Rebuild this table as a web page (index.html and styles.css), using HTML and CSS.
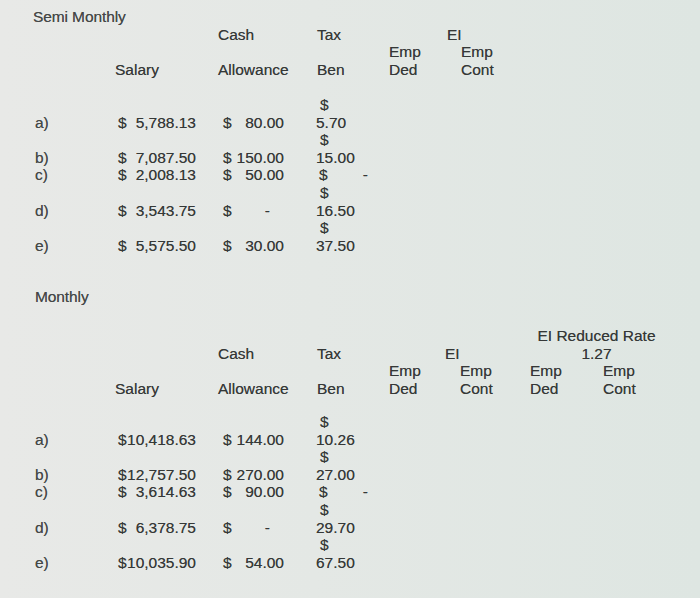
FILE: index.html
```html
<!DOCTYPE html>
<html>
<head>
<meta charset="utf-8">
<title>Semi Monthly / Monthly</title>
<link rel="stylesheet" href="styles.css">
</head>
<body>
<div class="page">
  <section class="sheet">
    <div class="title">Semi Monthly</div>
    <div class="row head">
      <div></div>
      <div class="h-sal">Salary</div>
      <div class="h-allow">Cash<br><br>Allowance</div>
      <div class="h-tax">Tax<br><br>Ben</div>
      <div class="h-ded">Emp<br>Ded</div>
      <div class="h-cont"><div class="ei">EI</div><div class="ec">Emp<br>Cont</div></div>
    </div>
    <div class="data">
      <div class="row">
        <div class="lbl">a)</div>
        <div class="money sal"><span>$</span><span>5,788.13</span></div>
        <div class="money allow"><span>$</span><span>80.00</span></div>
        <div class="tax"><div class="cur">$</div><div>5.70</div></div>
      </div>
      <div class="row">
        <div class="lbl">b)</div>
        <div class="money sal"><span>$</span><span>7,087.50</span></div>
        <div class="money allow"><span>$</span><span>150.00</span></div>
        <div class="tax"><div class="cur">$</div><div>15.00</div></div>
      </div>
      <div class="row">
        <div class="lbl">c)</div>
        <div class="money sal"><span>$</span><span>2,008.13</span></div>
        <div class="money allow"><span>$</span><span>50.00</span></div>
        <div class="money taxm"><span class="cur">$</span><span class="tdash">-</span></div>
      </div>
      <div class="row">
        <div class="lbl">d)</div>
        <div class="money sal"><span>$</span><span>3,543.75</span></div>
        <div class="money allow"><span>$</span><span class="adash">-</span></div>
        <div class="tax"><div class="cur">$</div><div>16.50</div></div>
      </div>
      <div class="row">
        <div class="lbl">e)</div>
        <div class="money sal"><span>$</span><span>5,575.50</span></div>
        <div class="money allow"><span>$</span><span>30.00</span></div>
        <div class="tax"><div class="cur">$</div><div>37.50</div></div>
      </div>
    </div>
  </section>

  <section class="sheet monthly">
    <div class="title m-title">Monthly</div>
    <div class="row head m-head">
      <div></div>
      <div class="h-sal">Salary</div>
      <div class="h-allow">Cash<br><br>Allowance</div>
      <div class="h-tax">Tax<br><br>Ben</div>
      <div class="h-ded">Emp<br>Ded</div>
      <div class="h-cont m-cont"><div class="ei">EI</div><div class="ec">Emp<br>Cont</div></div>
      <div class="reduced">
        <div class="r-title">EI Reduced Rate</div>
        <div class="r-rate">1.27</div>
        <div class="r-cols">
          <div class="r-ded">Emp<br>Ded</div>
          <div class="r-cont">Emp<br>Cont</div>
        </div>
      </div>
    </div>
    <div class="data m-data">
      <div class="row">
        <div class="lbl">a)</div>
        <div class="money sal"><span>$</span><span>10,418.63</span></div>
        <div class="money allow"><span>$</span><span>144.00</span></div>
        <div class="tax"><div class="cur">$</div><div>10.26</div></div>
      </div>
      <div class="row">
        <div class="lbl">b)</div>
        <div class="money sal"><span>$</span><span>12,757.50</span></div>
        <div class="money allow"><span>$</span><span>270.00</span></div>
        <div class="tax"><div class="cur">$</div><div>27.00</div></div>
      </div>
      <div class="row">
        <div class="lbl">c)</div>
        <div class="money sal"><span>$</span><span>3,614.63</span></div>
        <div class="money allow"><span>$</span><span>90.00</span></div>
        <div class="money taxm"><span class="cur">$</span><span class="tdash">-</span></div>
      </div>
      <div class="row">
        <div class="lbl">d)</div>
        <div class="money sal"><span>$</span><span>6,378.75</span></div>
        <div class="money allow"><span>$</span><span class="adash">-</span></div>
        <div class="tax"><div class="cur">$</div><div>29.70</div></div>
      </div>
      <div class="row">
        <div class="lbl">e)</div>
        <div class="money sal"><span>$</span><span>10,035.90</span></div>
        <div class="money allow"><span>$</span><span>54.00</span></div>
        <div class="tax"><div class="cur">$</div><div>67.50</div></div>
      </div>
    </div>
  </section>
</div>
</body>
</html>
```

FILE: styles.css
```css
html, body {
  margin: 0;
  padding: 0;
}

body {
  width: 700px;
  height: 598px;
  overflow: hidden;
  background: linear-gradient(90deg, #e8e9e7 0%, #e4e8e5 45%, #dee6e2 100%);
  font-family: "Liberation Sans", Arial, sans-serif;
  font-size: 15.5px;
  line-height: 17.6px;
  color: #353837;
  text-shadow: 0 0 0.6px rgba(40, 44, 42, 0.6);
}

.page {
  padding: 8px 0 0 33px;
}

.title {
  height: 17.6px;
  letter-spacing: -0.1px;
  color: #444746;
}

.m-title {
  margin-top: 33.8px;
  padding-left: 2px;
}

.row {
  display: grid;
  grid-template-columns: 85px 105px 93px 72px 52px 90px 133px;
  align-items: end;
}

.data {
  margin-top: 17.6px;
}

.m-head {
  margin-top: 21.4px;
}

.m-data {
  margin-top: 15.6px;
}

.lbl {
  padding-left: 2px;
  color: #454847;
}

.money {
  display: flex;
  justify-content: space-between;
}

.sal {
  width: 78px;
}

.allow {
  width: 61px;
}

.adash {
  padding-right: 14px;
}

.tax .cur {
  padding-left: 4px;
}

.taxm {
  width: 56px;
}

.taxm .cur {
  padding-left: 3px;
}

.tdash {
  padding-right: 4px;
}

.h-sal {
  margin-left: -3px;
}

.h-allow {
  margin-left: -5px;
}

.h-tax {
  margin-left: 1px;
}

.h-ded {
  margin-left: 1px;
}

.h-cont .ei {
  padding-left: 7px;
}

.h-cont .ec {
  padding-left: 21px;
}

.m-cont .ei {
  padding-left: 5px;
}

.m-cont .ec {
  padding-left: 20px;
}

.reduced {
  width: 133px;
}

.r-title,
.r-rate {
  text-align: center;
}

.r-cols {
  display: flex;
}

.r-ded {
  width: 73px;
}
```
